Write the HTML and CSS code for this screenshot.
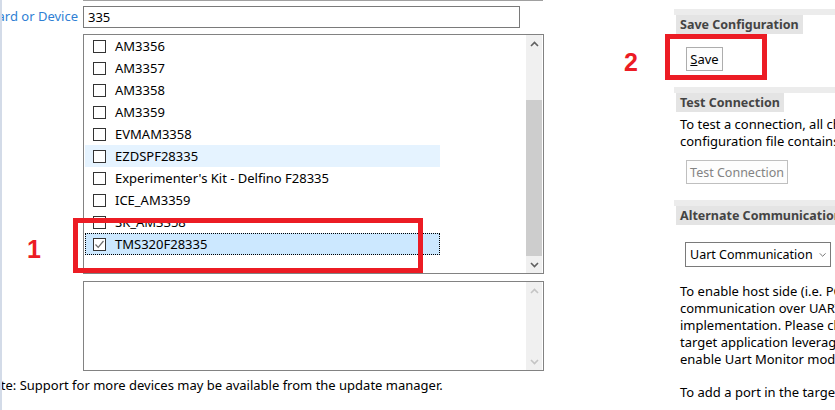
FILE: index.html
```html
<!DOCTYPE html>
<html lang="en">
<head>
<meta charset="UTF-8">
<meta name="viewport" content="width=device-width, initial-scale=1.0">
<title>Target Configuration</title>
<link rel="stylesheet" href="styles.css">
</head>
<body>

<div class="frame">

  <div class="left-col">
    <div class="top-rule"></div>

    <div class="filter-row">
      <div class="field-label">Board or Device</div>
      <div class="text-input">335</div>
    </div>

    <div class="device-list">
      <div class="rows">
        <div class="row"><span class="box"></span>AM3356</div>
        <div class="row"><span class="box"></span>AM3357</div>
        <div class="row"><span class="box"></span>AM3358</div>
        <div class="row"><span class="box"></span>AM3359</div>
        <div class="row"><span class="box"></span>EVMAM3358</div>
        <div class="row hover"><span class="box"></span>EZDSPF28335</div>
        <div class="row"><span class="box"></span>Experimenter's Kit - Delfino F28335</div>
        <div class="row"><span class="box"></span>ICE_AM3359</div>
        <div class="row"><span class="box"></span>SK_AM3358</div>
        <div class="row selected">
          <span class="box">
            <svg width="11" height="11" viewBox="0 0 11 11"><path d="M1.5 5.5 L4.2 8.3 L9.5 2" fill="none" stroke="#6a6a6a" stroke-width="1.2"/></svg>
          </span>TMS320F28335
        </div>
      </div>
      <div class="scrollbar">
        <div class="arrow">
          <svg width="9" height="6" viewBox="0 0 9 6"><path d="M1 5 L4.5 1.5 L8 5" fill="none" stroke="#606060" stroke-width="1.6"/></svg>
        </div>
        <div class="track-top"></div>
        <div class="thumb"></div>
        <div class="arrow">
          <svg width="9" height="6" viewBox="0 0 9 6"><path d="M1 1 L4.5 4.5 L8 1" fill="none" stroke="#606060" stroke-width="1.6"/></svg>
        </div>
      </div>
    </div>

    <div class="details">
      <div class="rows"></div>
      <div class="scrollbar">
        <div class="arrow">
          <svg width="9" height="6" viewBox="0 0 9 6"><path d="M1 5 L4.5 1.5 L8 5" fill="none" stroke="#c4c4c4" stroke-width="1.6"/></svg>
        </div>
        <div class="track-fill"></div>
        <div class="arrow">
          <svg width="9" height="6" viewBox="0 0 9 6"><path d="M1 1 L4.5 4.5 L8 1" fill="none" stroke="#c4c4c4" stroke-width="1.6"/></svg>
        </div>
      </div>
    </div>

    <p class="note">Note: Support for more devices may be available from the update manager.</p>

    <div class="mark mark-1"></div>
    <div class="mark-num num-1">1</div>
  </div>

  <div class="right-col">
    <div class="section">
      <div class="stripe"></div>
      <div class="section-title">Save Configuration</div>
      <div class="section-body">
        <button class="btn save-btn"><u>S</u>ave</button>
      </div>
    </div>

    <div class="section">
      <div class="stripe"></div>
      <div class="section-title">Test Connection</div>
      <div class="section-body">
        <p class="desc">To test a connection, all changes must have been saved, and the<br>configuration file contains at least one CPU.</p>
        <button class="btn test-btn" disabled>Test Connection</button>
      </div>
    </div>

    <div class="section">
      <div class="stripe"></div>
      <div class="section-title wide">Alternate Communication</div>
      <div class="section-body">
        <div class="select">
          <span>Uart Communication</span>
          <svg width="9" height="6" viewBox="0 0 9 6"><path d="M1 1 L4.5 4.5 L8 1" fill="none" stroke="#555" stroke-width="1"/></svg>
        </div>
        <p class="desc para">To enable host side (i.e. PC) support for data exchange and<br>communication over UART, the target needs a compatible<br>implementation. Please check the documentation on how the<br>target application leverages the UART port, or use it to<br>enable Uart Monitor mode for the selected CPU.</p>
        <p class="desc para">To add a port in the target configuration, use the Add button.</p>
      </div>
    </div>

    <div class="mark mark-2"></div>
    <div class="mark-num num-2">2</div>
  </div>

</div>

</body>
</html>
```

FILE: styles.css
```css
body {
  margin: 0;
  width: 835px;
  height: 410px;
  overflow: hidden;
  background-color: #fff;
  font-family: "Noto Sans", "Open Sans", sans-serif;
  font-size: 13px;
  color: #000;
}
.frame {
  display: flex;
  height: 410px;
  border-left: 2px solid #d3dbe8;
  overflow: hidden;
  box-sizing: border-box;
}
.left-col {
  position: relative;
  width: 541px;
  flex-shrink: 0;
}
.top-rule {
  margin-left: 81px;
  height: 1px;
  background-color: #a0a0a0;
}
.filter-row {
  display: flex;
  align-items: center;
  gap: 5px;
  margin-top: 5px;
}
.field-label {
  width: 76px;
  display: flex;
  justify-content: flex-end;
  white-space: nowrap;
  color: #2f7fd4;
  margin-top: -2px;
}
.text-input {
  width: 437px;
  height: 22px;
  line-height: 20px;
  box-sizing: border-box;
  border: 1px solid #7a7a7a;
  padding-left: 4px;
}
.device-list,
.details {
  display: flex;
  margin-left: 81px;
  width: 461px;
  box-sizing: border-box;
  border: 1px solid #828282;
}
.device-list {
  margin-top: 6px;
  height: 240px;
}
.details {
  margin-top: 7px;
  height: 90px;
}
.rows {
  flex: 1;
}
.row {
  display: flex;
  align-items: center;
  width: 355px;
  height: 22px;
  margin-left: 1px;
  box-sizing: border-box;
  padding-left: 8px;
  white-space: nowrap;
}
.row.hover {
  background-color: #e5f3ff;
}
.row.selected {
  background-color: #cce8ff;
  border: 1px dotted #000;
  padding-left: 7px;
}
.box {
  display: flex;
  align-items: center;
  justify-content: center;
  width: 13px;
  height: 13px;
  box-sizing: border-box;
  border: 1px solid #333;
  background-color: #fff;
  margin-right: 9px;
}
.scrollbar {
  display: flex;
  flex-direction: column;
  width: 16px;
  margin-right: 1px;
  background-color: #f0f0f0;
}
.arrow {
  height: 17px;
  display: flex;
  align-items: center;
  justify-content: center;
}
.track-top {
  height: 48px;
}
.thumb {
  flex: 1;
  background-color: #cdcdcd;
}
.track-fill {
  flex: 1;
}
.note {
  margin: 6px 0 0 -19px;
  line-height: 16px;
  white-space: nowrap;
}
.mark {
  position: absolute;
  box-sizing: border-box;
  border: 5px solid #ec1c24;
}
.mark-1 {
  left: 71px;
  top: 218px;
  width: 350px;
  height: 55px;
}
.mark-num {
  position: absolute;
  font-family: "Liberation Sans", Arial, sans-serif;
  font-weight: bold;
  font-size: 25px;
  line-height: 25px;
  color: #ec1c24;
}
.num-1 {
  left: 25px;
  top: 237px;
}
.right-col {
  position: relative;
  width: 320px;
  flex-shrink: 0;
  margin-left: 131px;
  padding-top: 9px;
}
.section {
  margin-bottom: 16px;
}
.stripe {
  height: 6px;
  background-color: #ececec;
}
.section-title {
  display: inline-block;
  margin-left: 2px;
  padding: 0 4px;
  height: 19px;
  line-height: 19px;
  background-color: #e4e4e4;
  color: #444;
  font-size: 12.5px;
  font-weight: bold;
}
.section-title.wide {
  display: block;
}
.section-body {
  padding-left: 6px;
}
.btn {
  font-family: inherit;
  font-size: 13px;
  height: 24px;
  margin-left: 6px;
  padding: 0;
  background-color: #fdfdfd;
  border: 1px solid #adadad;
  color: #000;
  white-space: nowrap;
}
.btn:disabled {
  color: #838383;
  border-color: #bfbfbf;
}
.save-btn {
  margin-top: 13px;
  width: 37px;
}
.test-btn {
  width: 102px;
  font-size: 12.5px;
}
.desc {
  margin: 4px 0 10px;
  line-height: 17px;
  white-space: nowrap;
}
.select {
  display: flex;
  align-items: center;
  justify-content: space-between;
  gap: 6px;
  margin: 17px 0 0 5px;
  width: 146px;
  height: 25px;
  box-sizing: border-box;
  border: 1px solid #7a7a7a;
  padding: 0 4px;
  white-space: nowrap;
  font-size: 12.5px;
}
.desc.para {
  margin: 16px 0 0;
}
.mark-2 {
  left: -9px;
  top: 34px;
  width: 102px;
  height: 46px;
}
.num-2 {
  left: -50px;
  top: 50px;
}
```
